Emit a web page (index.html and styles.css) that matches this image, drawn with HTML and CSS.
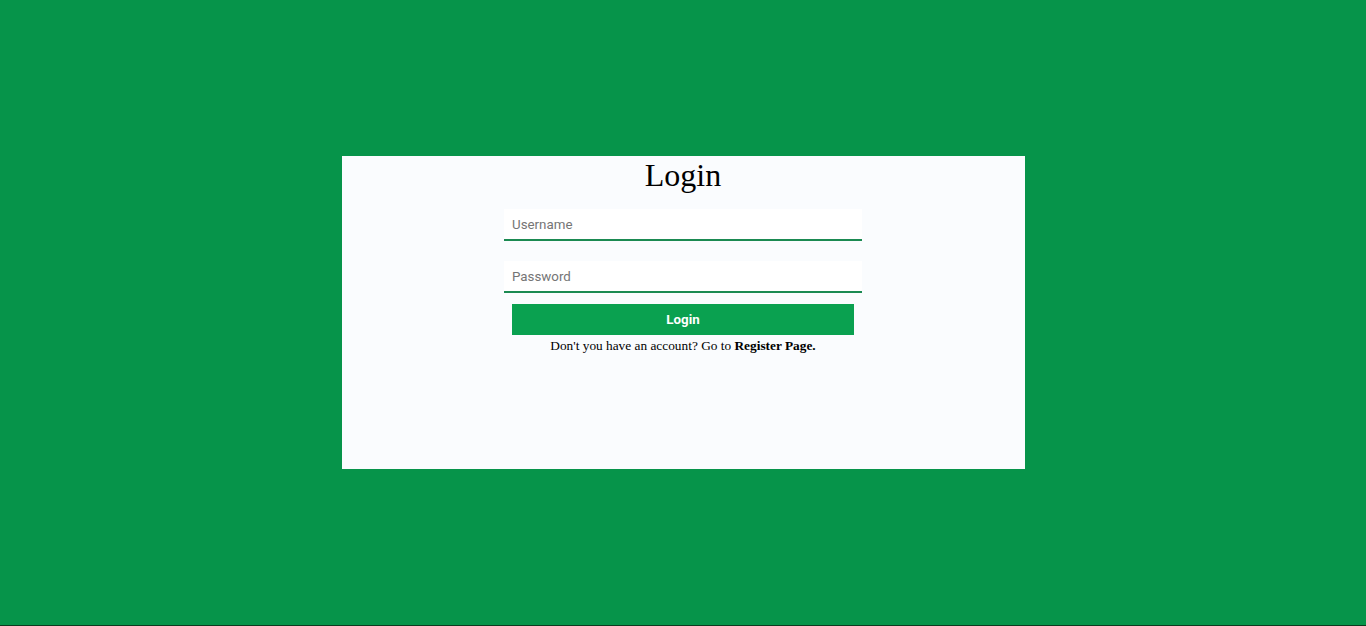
FILE: index.html
```html
<!DOCTYPE html>
<html>
<head>
<meta charset="utf-8">
<title>Login</title>
<link rel="stylesheet" href="styles.css">
</head>
<body>
<main class="page">
  <section class="card">
    <h1 class="title">Login</h1>
    <form class="form">
      <input class="field" type="text" placeholder="Username">
      <input class="field" type="password" placeholder="Password">
      <button class="btn" type="button">Login</button>
      <p class="note">Don't you have an account? Go to <b>Register Page.</b></p>
    </form>
  </section>
</main>
</body>
</html>
```

FILE: styles.css
```css
html, body {
  margin: 0;
  padding: 0;
}
body {
  background: #06944a;
  font-family: "Liberation Serif", serif;
}
.page {
  height: 626px;
  box-sizing: border-box;
  border-bottom: 1px solid #0b3b1f;
  display: flex;
  align-items: center;
  justify-content: center;
}
.card {
  width: 683px;
  height: 313px;
  box-sizing: border-box;
  padding-top: 1px;
  background: #fafcfe;
  display: flex;
  flex-direction: column;
  align-items: center;
}
.title {
  margin: 0;
  font-family: "Liberation Serif", serif;
  font-size: 32px;
  font-weight: normal;
  color: #000;
}
.form {
  margin-top: 15px;
  width: 358px;
  display: flex;
  flex-direction: column;
}
.field {
  display: block;
  box-sizing: border-box;
  width: 358px;
  height: 32px;
  margin: 0 0 20px;
  padding: 0 8px;
  border: none;
  border-bottom: 2px solid #1b8a52;
  background: #ffffff;
  font-family: Roboto, "Liberation Sans", sans-serif;
  font-size: 13.33px;
  color: #222;
  outline: none;
}
.field:last-of-type {
  margin-bottom: 0;
}
.field::placeholder {
  color: #757575;
}
.btn {
  margin: 11px 8px 0;
  height: 31px;
  border: none;
  background: #0aa150;
  color: #fff;
  font-family: Roboto, "Liberation Sans", sans-serif;
  font-weight: bold;
  font-size: 13.33px;
  padding: 0;
}
.note {
  margin: 3px 0 0;
  text-align: center;
  font-family: "Liberation Serif", serif;
  font-size: 13.33px;
  color: #000;
}
```
